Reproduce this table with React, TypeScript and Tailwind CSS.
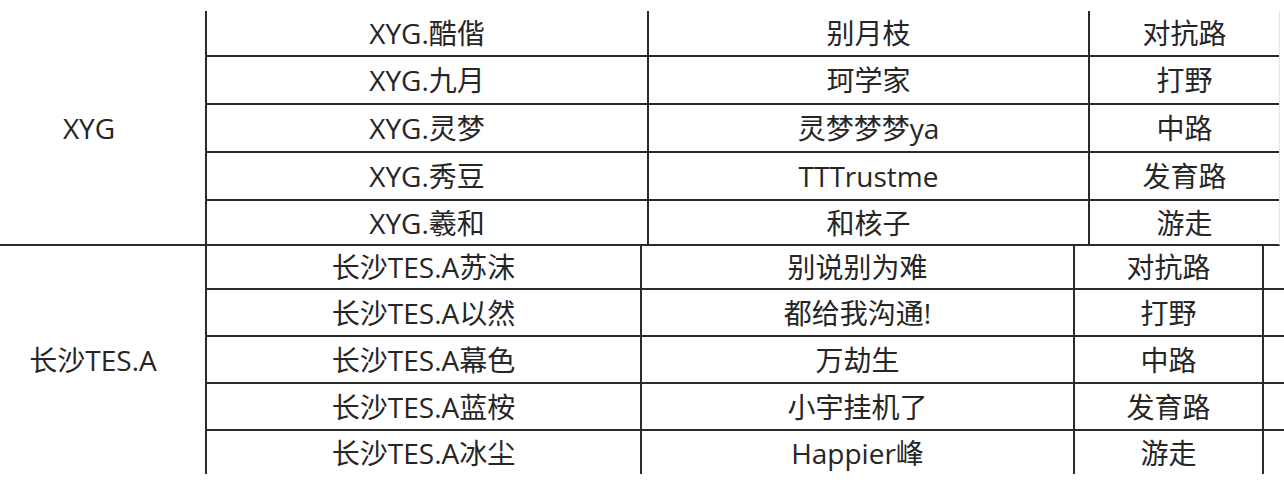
import React from "react";

const topRows = [
  ["XYG.酷偕", "别月枝", "对抗路"],
  ["XYG.九月", "珂学家", "打野"],
  ["XYG.灵梦", "灵梦梦梦ya", "中路"],
  ["XYG.秀豆", "TTTrustme", "发育路"],
  ["XYG.羲和", "和核子", "游走"],
];
const topHeights = ["h-[46px]", "h-[48px]", "h-[48px]", "h-[48px]", "h-[43px]"];

const botRows = [
  ["长沙TES.A苏沫", "别说别为难", "对抗路"],
  ["长沙TES.A以然", "都给我沟通!", "打野"],
  ["长沙TES.A幕色", "万劫生", "中路"],
  ["长沙TES.A蓝桉", "小宇挂机了", "发育路"],
  ["长沙TES.A冰尘", "Happier峰", "游走"],
];
const botHeights = ["h-[44px]", "h-[47px]", "h-[47px]", "h-[47px]", "h-[43px]"];

export default function App() {
  return (
    <div
      className="w-[1284px] h-[485px] bg-white text-[#262626] text-[28px] leading-none overflow-hidden"
      style={{ fontFamily: '"Open Sans", "Noto Sans CJK SC", sans-serif' }}
    >
      <div className="h-[11px]" />
      {/* top table */}
      <div className="flex w-[1280px] border-b-2 border-[#2a2a2a] border-r border-r-[#e6e6e6]">
        <div className="w-[205px] flex items-center justify-center pr-[27px]">XYG</div>
        <div className="flex flex-col flex-1">
          {topRows.map((r, i) => (
            <div key={i} className={`flex ${topHeights[i]} ${i < 4 ? "border-b-2 border-[#2a2a2a]" : ""}`}>
              <div className="w-[442px] border-l-2 border-[#2a2a2a] flex items-center justify-center">{r[0]}</div>
              <div className="w-[441px] border-l-2 border-[#2a2a2a] flex items-center justify-center">{r[1]}</div>
              <div className="flex-1 border-l-2 border-[#2a2a2a] flex items-center justify-center">{r[2]}</div>
            </div>
          ))}
        </div>
      </div>
      {/* bottom table */}
      <div className="flex w-[1284px]">
        <div className="w-[205px] flex items-center justify-center pr-[19px]">长沙TES.A</div>
        <div className="flex flex-col flex-1">
          {botRows.map((r, i) => (
            <div key={i} className={`flex ${botHeights[i]} ${i < 4 ? "border-b-2 border-[#2a2a2a]" : ""}`}>
              <div className="w-[435px] border-l-2 border-[#2a2a2a] flex items-center justify-center">{r[0]}</div>
              <div className="w-[433px] border-l-2 border-[#2a2a2a] flex items-center justify-center">{r[1]}</div>
              <div className="w-[189px] border-l-2 border-[#2a2a2a] flex items-center justify-center">{r[2]}</div>
              <div className="flex-1 border-l-2 border-[#2a2a2a]" />
            </div>
          ))}
        </div>
      </div>
    </div>
  );
}
